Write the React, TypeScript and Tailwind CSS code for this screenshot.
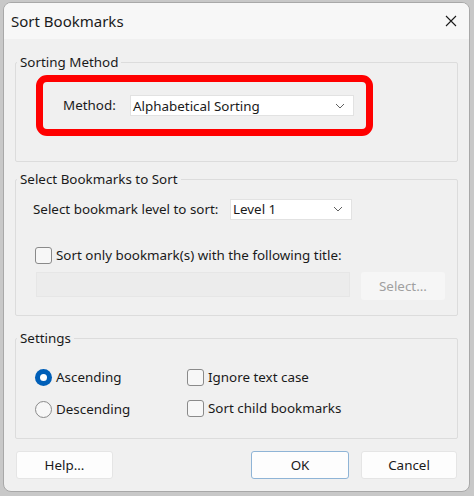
import React from "react"

const font = { fontFamily: '"Noto Sans", "Open Sans", sans-serif' }

function Chevron() {
  return (
    <svg width="10" height="6" viewBox="0 0 10 6" className="text-[#606060]">
      <path d="M1 1 L5 5 L9 1" fill="none" stroke="currentColor" strokeWidth="1" />
    </svg>
  )
}

function Dropdown({ value, className }: { value: string; className: string }) {
  return (
    <div className={`flex items-center justify-between bg-white border border-[#e2e2e2] pl-[2px] pr-[8px] ${className}`}>
      <span className="text-[13.4px] leading-[18px] text-[#1a1a1a]">{value}</span>
      <Chevron />
    </div>
  )
}

function Checkbox() {
  return <div className="w-[17px] h-[17px] rounded-[3px] border border-[#8a8a8a] bg-[#f7f7f7] shrink-0" />
}

function Radio({ checked }: { checked?: boolean }) {
  if (checked) {
    return (
      <div className="w-[17px] h-[17px] rounded-full bg-[#005fb8] flex items-center justify-center shrink-0">
        <div className="w-[7px] h-[7px] rounded-full bg-white" />
      </div>
    )
  }
  return <div className="w-[17px] h-[17px] rounded-full border border-[#8a8a8a] bg-[#f7f7f7] shrink-0" />
}

function Group({ title, className, inner, children }: { title: string; className: string; inner: string; children: React.ReactNode }) {
  return (
    <fieldset className={`border border-[#dcdcdc] rounded-[2px] ${className}`}>
      <legend className="ml-[1px] pl-[3px] pr-[3px] text-[13.4px] leading-[16px] text-[#1a1a1a]">{title}</legend>
      <div className={inner}>{children}</div>
    </fieldset>
  )
}

function Button({ label, className }: { label: string; className: string }) {
  return (
    <div className={`h-[28px] flex items-center justify-center text-[13.4px] text-[#1a1a1a] rounded-[3px] ${className}`}>
      {label}
    </div>
  )
}

export default function App() {
  return (
    <div className="w-[474px] h-[496px] bg-[#c8c8c8] pt-[2px] pl-[3px]" style={font}>
      <div className="w-[467px] h-[490px] rounded-[8px] border border-[#a8a8a8] bg-[#f0f0f0] overflow-hidden flex flex-col">
        {/* title bar */}
        <div className="h-[36px] shrink-0 flex items-center justify-between pl-[7px] pr-[12px] bg-[#f7f7f7]">
          <span className="text-[15px] text-[#1a1a1a] pt-[1px]">Sort Bookmarks</span>
          <svg width="12" height="12" viewBox="0 0 12 12">
            <path d="M1 1 L11 11 M11 1 L1 11" stroke="#1a1a1a" strokeWidth="1.1" />
          </svg>
        </div>

        <div className="flex flex-col px-[11px] pt-[15px] text-[13.4px]">
          <Group title="Sorting Method" className="h-[108px]" inner="pl-[20px] pt-[5px]">
            <div className="w-[337px] h-[61px] border-[7px] border-[#ff0000] rounded-[11px] flex items-center pl-[20px] bg-[#f0f0f0]">
              <span className="text-[#1a1a1a] w-[67px]">Method:</span>
              <Dropdown value="Alphabetical Sorting" className="w-[224px] h-[21px]" />
            </div>
          </Group>

          <Group title="Select Bookmarks to Sort" className="mt-[9px] h-[145px]" inner="pl-[17px] pr-[12px] pt-[11px]">
            <div className="flex items-center h-[22px]">
              <span className="text-[#1a1a1a] w-[197px]">Select bookmark level to sort:</span>
              <Dropdown value="Level 1" className="w-[122px] h-[21px]" />
            </div>
            <div className="flex items-center gap-[4px] mt-[26px] ml-[2px] h-[18px]">
              <Checkbox />
              <span className="text-[#1a1a1a]">Sort only bookmark(s) with the following title:</span>
            </div>
            <div className="flex items-start justify-between mt-[8px] ml-[3px]">
              <div className="w-[314px] h-[25px] bg-[#ececec] border border-[#e6e6e6]" />
              <Button label="Select..." className="w-[84px] bg-[#f6f6f6] !text-[#a0a0a0]" />
            </div>
          </Group>

          <Group title="Settings" className="mt-[14px] h-[109px]" inner="pl-[19px] pt-[22px]">
            <div className="flex">
              <div className="flex flex-col gap-[14px] w-[152px]">
                <div className="flex items-center gap-[4px] h-[18px]">
                  <Radio checked />
                  <span className="text-[#1a1a1a]">Ascending</span>
                </div>
                <div className="flex items-center gap-[4px] h-[18px]">
                  <Radio />
                  <span className="text-[#1a1a1a]">Descending</span>
                </div>
              </div>
              <div className="flex flex-col gap-[13px]">
                <div className="flex items-center gap-[4px] h-[18px]">
                  <Checkbox />
                  <span className="text-[#1a1a1a]">Ignore text case</span>
                </div>
                <div className="flex items-center gap-[4px] h-[18px]">
                  <Checkbox />
                  <span className="text-[#1a1a1a]">Sort child bookmarks</span>
                </div>
              </div>
            </div>
          </Group>

          <div className="flex items-center mt-[12px] pl-[1px]">
            <Button label="Help..." className="w-[97px] bg-[#fdfdfd] border border-[#e5e5e5]" />
            <div className="flex-1" />
            <Button label="OK" className="w-[98px] bg-[#fdfdfd] border border-[#8fb4d6]" />
            <Button label="Cancel" className="w-[96px] ml-[12px] mr-[1px] bg-[#fdfdfd] border border-[#e5e5e5]" />
          </div>
        </div>
      </div>
    </div>
  )
}
